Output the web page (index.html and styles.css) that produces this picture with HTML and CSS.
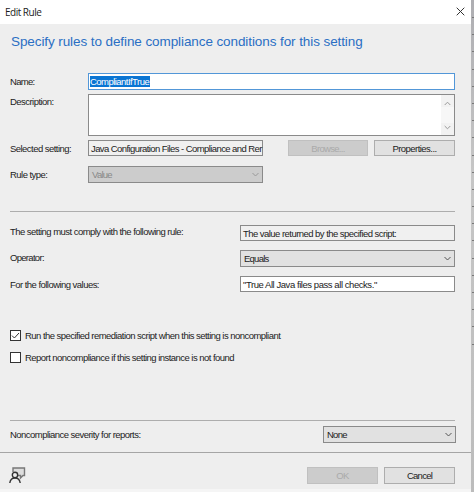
FILE: index.html
```html
<!DOCTYPE html>
<html lang="en">
<head>
    <meta charset="UTF-8">
    <meta name="viewport" content="width=device-width, initial-scale=1.0">
    <title>Edit Rule</title>
    <link rel="stylesheet" href="styles.css">
</head>
<body>
    <div class="screen">
        <div class="dialog">
            <div class="titlebar">
                <span class="title">Edit Rule</span>
                <svg class="close" viewBox="0 0 9 9"><path d="M.7 .7L8.3 8.3M8.3 .7L.7 8.3"/></svg>
            </div>

            <div class="content">
                <h1>Specify rules to define compliance conditions for this setting</h1>

                <div class="row name-row">
                    <label class="tight">Name:</label>
                    <div class="field focus"><span class="selected">CompliantIfTrue</span></div>
                </div>
                <div class="row desc-row">
                    <label>Description:</label>
                    <div class="field area">
                        <div class="scroll">
                            <svg class="chevron" viewBox="0 0 7 5"><path d="M.7 4L3.5 1.2 6.3 4"/></svg>
                            <svg class="chevron" viewBox="0 0 7 5"><path d="M.7 1L3.5 3.8 6.3 1"/></svg>
                        </div>
                    </div>
                </div>
                <div class="row setting-row">
                    <label>Selected setting:</label>
                    <div class="field readonly java"><span>Java Configuration Files - Compliance and Rer</span></div>
                    <div class="button disabled browse"><span>Browse...</span></div>
                    <div class="button properties"><span>Properties...</span></div>
                </div>
                <div class="row type-row">
                    <label>Rule type:</label>
                    <div class="select disabled">
                        <span>Value</span>
                        <svg class="chevron" viewBox="0 0 7 5"><path d="M.5 1L3.5 4 6.5 1"/></svg>
                    </div>
                </div>

                <hr class="line">

                <div class="row wide rule-row">
                    <label>The setting must comply with the following rule:</label>
                    <div class="field readonly"><span>The value returned by the specified script:</span></div>
                </div>
                <div class="row wide operator-row">
                    <label class="tight">Operator:</label>
                    <div class="select">
                        <span>Equals</span>
                        <svg class="chevron" viewBox="0 0 7 5"><path d="M.5 1L3.5 4 6.5 1"/></svg>
                    </div>
                </div>
                <div class="row wide values-row">
                    <label>For the following values:</label>
                    <div class="field value"><span>"True All Java files pass all checks."</span></div>
                </div>

                <div class="check">
                    <span class="box"><svg viewBox="0 0 9 9"><path d="M1 4.6L3.4 7 8 2"/></svg></span>
                    <span>Run the specified remediation script when this setting is noncompliant</span>
                </div>
                <div class="check">
                    <span class="box"></span>
                    <span>Report noncompliance if this setting instance is not found</span>
                </div>

                <hr class="line bottom-line">

                <div class="row severity-row">
                    <label>Noncompliance severity for reports:</label>
                    <div class="select">
                        <span>None</span>
                        <svg class="chevron" viewBox="0 0 7 5"><path d="M.5 1L3.5 4 6.5 1"/></svg>
                    </div>
                </div>
            </div>

            <div class="footer">
                <svg class="feedback" viewBox="0 0 17 17">
                    <path class="bubble" d="M4 5V1H15.5V8.5H14L11.5 11V8.5H9"/>
                    <circle cx="6" cy="8" r="2.7"/>
                    <path d="M.8 16C1.2 12.8 3 11 6 11S10.8 12.8 11.2 16"/>
                </svg>
                <div class="button disabled"><span>OK</span></div>
                <div class="button cancel"><span>Cancel</span></div>
            </div>
        </div>

        <!-- edge of the window behind the dialog -->
        <div class="behind">
            <i></i><i></i><i></i><i></i><i></i><i></i><i></i><i></i><i></i><i></i>
            <i></i><i></i><i></i><i></i><i></i><i></i><i></i><i></i><i></i><i></i>
        </div>
    </div>
</body>
</html>
```

FILE: styles.css
```css
* {
    box-sizing: border-box;
}

body {
    margin: 0;
    overflow: hidden;
    font-family: "Liberation Sans", Arial, sans-serif;
    font-size: 9.5px;
    letter-spacing: -0.54px;
    color: #1c1c1c;
}

.screen {
    display: flex;
    width: 474px;
    height: 492px;
}

.dialog {
    width: 471px;
    background-color: #eee;
    border-bottom: 3px solid #f5f5f5;
    display: flex;
    flex-direction: column;
}

.titlebar {
    height: 24px;
    flex: none;
    background-color: #fff;
    display: flex;
    align-items: center;
    justify-content: space-between;
    padding: 0 6px 1px 5px;
}

.title {
    font-family: "Open Sans", "Noto Sans", sans-serif;
    font-size: 10px;
    letter-spacing: -0.5px;
}

.close {
    width: 9px;
    height: 9px;
}

svg {
    display: block;
    fill: none;
    stroke: #333;
    stroke-width: 1;
}

.content {
    height: 428px;
    flex: none;
    padding: 0 16px 0 10px;
}

h1 {
    margin: 0;
    padding: 9px 0 0 1px;
    height: 49px;
    font-size: 13.5px;
    line-height: 18px;
    font-weight: normal;
    letter-spacing: -0.09px;
    color: #2a6fc4;
    white-space: nowrap;
}

.row {
    display: grid;
    grid-template-columns: 78px 1fr;
    height: 17px;
    align-items: center;
    white-space: nowrap;
}

.row.wide {
    grid-template-columns: 230px 1fr;
}

.tight {
    letter-spacing: -0.7px;
}

.field,
.select,
.button {
    height: 100%;
    display: flex;
    align-items: center;
    border: 1px solid #8a8a8a;
    min-width: 0;
}

.field {
    background-color: #fff;
    padding-left: 2px;
}

.field.readonly {
    background-color: #f0f0f0;
}

.field.focus {
    border-color: #5297d8;
    padding-left: 1px;
}

.field.value {
    letter-spacing: -0.44px;
}

.selected {
    background-color: #0a75d3;
    color: #fff;
    line-height: 11px;
    padding-right: 1px;
}

.select {
    background-color: #e1e1e1;
    justify-content: space-between;
    letter-spacing: -0.75px;
    padding: 0 3px;
}

.button {
    background-color: #e1e1e1;
    border-color: #adadad;
    justify-content: center;
}

.disabled {
    background-color: #ccc;
    color: #888;
}

.button.disabled {
    border-color: #c0c0c0;
    color: #aaa;
}

.chevron {
    width: 7px;
    height: 5px;
    stroke: #555;
}

.disabled .chevron,
.scroll .chevron {
    stroke: #999;
}

.desc-row {
    height: 42px;
    margin-top: 4px;
    align-items: start;
}

.desc-row label {
    padding-top: 2px;
}

.area {
    justify-content: flex-end;
}

.scroll {
    width: 13px;
    height: 100%;
    display: flex;
    flex-direction: column;
    justify-content: space-between;
    align-items: center;
    padding: 6px 0 5px;
    background: linear-gradient(#f2f2f2 0 12px, #f7f7f7 12px 28px, #f2f2f2 28px);
}

.setting-row {
    grid-template-columns: 78px 175px 105px 87px;
    height: 16px;
    margin-top: 4px;
}

.java {
    letter-spacing: -0.58px;
}

.browse {
    margin-left: 25px;
    letter-spacing: -0.7px;
}

.properties {
    margin-left: 6px;
}

.type-row {
    grid-template-columns: 78px 175px;
    margin-top: 10px;
}

.line {
    height: 1px;
    margin: 28px 0 0;
    border: none;
    background-color: #adadad;
}

.rule-row {
    height: 16px;
    margin-top: 13px;
}

.operator-row {
    margin-top: 9px;
}

.rule-row label,
.operator-row label {
    padding-bottom: 3px;
}

.values-row {
    height: 16px;
    margin-top: 9px;
}

.check {
    display: flex;
    align-items: center;
    height: 11px;
    margin-top: 11px;
    gap: 4px;
    white-space: nowrap;
}

.values-row + .check {
    margin-top: 38px;
}

.box {
    width: 11px;
    height: 11px;
    border: 1px solid #333;
    background-color: #fff;
}

.box svg {
    width: 9px;
    height: 9px;
}

.bottom-line {
    margin-top: 57px;
}

.severity-row {
    grid-template-columns: 313px 133px;
    margin-top: 5px;
}

.footer {
    flex: 1;
    display: flex;
    gap: 6px;
    padding: 14px 16px 0 9px;
    border-top: 1px solid #a5a5a5;
}

.footer .button {
    width: 71px;
    height: 17px;
}

.cancel {
    letter-spacing: -0.75px;
}

.feedback {
    width: 17px;
    height: 17px;
    margin-right: auto;
    stroke-width: 1.4;
}

.bubble {
    stroke: #777;
    fill: #ddd;
}

.behind {
    width: 3px;
    background: linear-gradient(#aeaeb2, #c6c6c6 35%, #bcbcbc);
    display: flex;
    flex-direction: column;
    align-items: flex-end;
    gap: 16.2px;
    padding-top: 17px;
}

.behind i {
    width: 2px;
    height: 1px;
    background-color: #777;
}
```
